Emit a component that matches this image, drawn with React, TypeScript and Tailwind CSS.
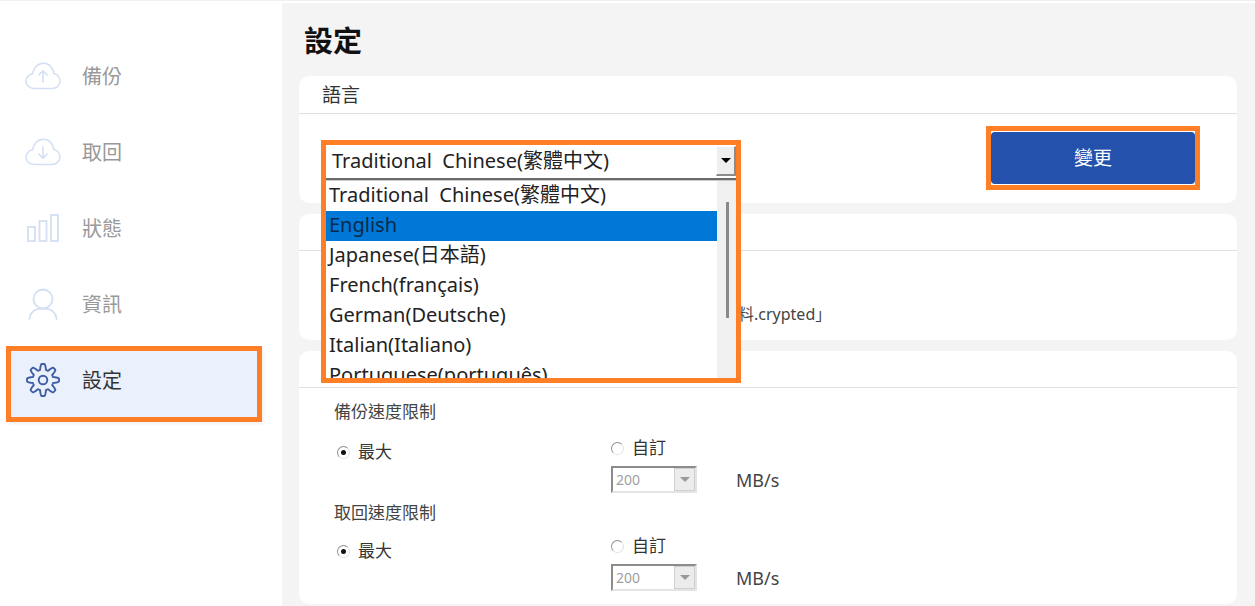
import React from "react"

const font = "font-['Noto_Sans','Noto_Sans_CJK_TC',sans-serif]"

const CloudIcon = ({ down }: { down?: boolean }) => (
  <svg width="36" height="28" viewBox="0 0 36 28" fill="none" stroke="#d3dff3" strokeWidth="1.6" strokeLinecap="round" strokeLinejoin="round">
    <path d="M9 26.5C4.500 26.500 1 23 1 19.300 1 15.500 4 12.300 7.500 11.800 8.500 5.800 13 1.200 18.500 1.200 24 1.200 28 5.500 28.800 11.500 32.300 12.300 35 15.500 35 19.300 35 23.300 31.500 26.500 27 26.500Z" />
    {down ? <path d="M18 9V20M13.800 16L18 20.200 22.200 16" /> : <path d="M18 20V9M13.800 13L18 8.800 22.200 13" />}
  </svg>
)

const BarsIcon = () => (
  <svg width="34" height="28" viewBox="0 0 34 28" fill="none" stroke="#d3dff3" strokeWidth="1.8">
    <rect x="2" y="13" width="7" height="14" />
    <rect x="13.500" y="7" width="7" height="20" />
    <rect x="25" y="1" width="7" height="26" />
  </svg>
)

const UserIcon = () => (
  <svg width="30" height="32" viewBox="0 0 30 32" fill="none" stroke="#d3dff3" strokeWidth="1.8" strokeLinecap="round">
    <circle cx="15" cy="11" r="9.500" />
    <path d="M1.500 31C2 24.500 7 20.500 15 20.500S28 24.500 28.500 31" />
  </svg>
)

// 8 lobed cog outline, sampled around the centre
const gearPath = Array.from({ length: 200 }, (_, i) => {
  const a = (i / 200) * Math.PI * 2
  const wave = Math.max(-1, Math.min(1, Math.cos(8 * a) * 1.5))
  const r = 13.2 + 2.8 * wave
  const x = 17 + r * Math.sin(a)
  const y = 17 - r * Math.cos(a)
  return `${i === 0 ? "M" : "L"}${x.toFixed(2)} ${y.toFixed(2)}`
}).join(" ") + "Z"

const GearIcon = () => (
  <svg width="34" height="34" viewBox="0 0 34 34" fill="none" stroke="#3f5ea3" strokeWidth="1.9" strokeLinejoin="round">
    <path d={gearPath} />
    <circle cx="17" cy="17" r="4.300" />
  </svg>
)

const navItems = [
  { label: "備份", icon: <CloudIcon /> },
  { label: "取回", icon: <CloudIcon down /> },
  { label: "狀態", icon: <BarsIcon /> },
  { label: "資訊", icon: <UserIcon /> },
]

const options = [
  "Traditional  Chinese(繁體中文)",
  "English",
  "Japanese(日本語)",
  "French(français)",
  "German(Deutsche)",
  "Italian(Italiano)",
  "Portuguese(português)",
]

const Radio = ({ checked }: { checked?: boolean }) => (
  <span className="flex h-[13px] w-[13px] items-center justify-center rounded-full border border-b-[#e2e2e2] border-l-[#8f8f8f] border-r-[#e2e2e2] border-t-[#8f8f8f] bg-white">
    {checked && <span className="h-[5px] w-[5px] rounded-full bg-[#111]"></span>}
  </span>
)

const SpeedRow = ({ title, rowClass, leftClass }: { title: string; rowClass: string; leftClass: string }) => (
  <div>
    <div className="h-[24px] pl-[35px] text-[17px] leading-[24px] text-[#444]">{title}</div>
    <div className={`grid grid-cols-[312px_1fr] ${rowClass}`}>
      <div className={`flex items-center gap-[8px] self-start pl-[38px] text-[17px] leading-[24px] text-[#333] ${leftClass}`}>
        <Radio checked />
        <span>最大</span>
      </div>
      <div>
        <div className="flex items-center gap-[8px] text-[17px] leading-[24px] text-[#333]">
          <Radio />
          <span>自訂</span>
        </div>
        <div className="mt-[6px] flex items-center">
          <div className="flex h-[27px] w-[86px] items-stretch border-2 border-b-[#e4e4e4] border-l-[#8c8c8c] border-r-[#e4e4e4] border-t-[#8c8c8c] bg-white">
            <span className="flex-1 pl-[3px] text-[14px] leading-[23px] text-[#a0a0a0]">200</span>
            <span className="flex w-[21px] items-center justify-center border border-[#cfcfcf] bg-[#ececec]">
              <span className="border-x-[5px] border-t-[5px] border-x-transparent border-t-[#9a9a9a]"></span>
            </span>
          </div>
          <span className="ml-[39px] text-[18px] leading-[24px] text-[#444]">MB/s</span>
        </div>
      </div>
    </div>
  </div>
)

const App = () => {
  return (
    <div className={`flex h-[606px] w-[1255px] overflow-hidden border-t border-[#f0f0f0] bg-[#f4f4f4] ${font}`}>
      {/* SIDEBAR */}
      <aside className="relative w-[282px] shrink-0 bg-white pt-[37px]">
        {navItems.map((item) => (
          <div key={item.label} className="flex h-[76px] items-center">
            <div className="flex w-[82px] justify-center pl-[4px]">{item.icon}</div>
            <span className="mt-[1px] text-[20px] leading-none text-[#999]">{item.label}</span>
          </div>
        ))}
        <div className="relative flex h-[76px] items-center">
          <div className="absolute left-[6px] top-[4px] h-[76px] w-[256px] border-[5px] border-[#ff7f27] bg-[#eaf1fd] shadow-[2px_2px_3px_rgba(0,0,0,0.06)]"></div>
          <div className="relative flex w-[82px] justify-center pl-[4px]">
            <GearIcon />
          </div>
          <span className="relative mt-[2px] text-[20px] leading-none text-[#333]">設定</span>
        </div>
      </aside>

      {/* MAIN */}
      <main className="flex-1 border-t-2 border-white pl-[17px] pr-[18px]">
        <h1 className="h-[73px] pl-[5px] pt-[16px] text-[29px] font-bold leading-[44px] text-[#111]">設定</h1>

        {/* LANGUAGE CARD */}
        <section className="relative h-[127px] rounded-[10px] bg-white">
          <div className="h-[38px] border-b border-[#e0e0e0] pl-[23px] text-[19px] leading-[39px] text-[#333]">語言</div>

          <div className="absolute left-[22px] top-[64px] z-10 h-[243px] w-[420px] border-[5px] border-[#ff7f27] bg-white">
            <div className="flex h-[35px] items-start justify-between border-b-2 border-[#6b6b6b] pl-[6px]">
              <span className="whitespace-pre text-[20px] leading-[31px] text-[#222]">{options[0]}</span>
              <span className="mt-[1px] flex h-[30px] w-[20px] items-center justify-center border-b-2 border-l border-r-2 border-t border-b-[#8c8c8c] border-l-white border-r-[#8c8c8c] border-t-white bg-[#efefef]">
                <span className="border-x-[5px] border-t-[5px] border-x-transparent border-t-black"></span>
              </span>
            </div>
            <div className="relative h-[198px] overflow-hidden border-t border-[#ccc]">
              {options.map((opt, i) => (
                <div
                  key={opt}
                  className={`h-[30px] w-[391px] whitespace-pre pl-[3px] text-[20px] leading-[28px] ${i === 1 ? "bg-[#0078d7] text-[#0a2a4a]" : "text-[#222]"}`}
                >
                  {opt}
                </div>
              ))}
              <div className="absolute bottom-0 right-0 top-0 w-[19px] bg-[#f0f0f0]">
                <div className="ml-[9px] mt-[21px] h-[116px] w-[3px] bg-[#8a8a8a]"></div>
              </div>
            </div>
          </div>

          <div className="absolute left-[687px] top-[50px] flex h-[64px] w-[214px] items-stretch border-[5px] border-[#ff7f27] bg-white">
            <button className="my-[1px] w-full rounded-[4px] bg-[#2351ab] text-[19px] text-white">變更</button>
          </div>
        </section>

        {/* ENCRYPT CARD */}
        <section className="mt-[11px] h-[126px] rounded-[10px] bg-white">
          <div className="h-[37px] border-b border-[#e0e0e0]"></div>
          <div className="ml-[423px] pt-[53px] text-[16px] leading-[20px] text-[#444]">資料.crypted」</div>
        </section>

        {/* SPEED CARD */}
        <section className="mt-[11px] h-[253px] rounded-[10px] bg-white">
          <div className="h-[37px] border-b border-[#e0e0e0]"></div>
          <div className="pt-[12px]">
            <SpeedRow title="備份速度限制" rowClass="mt-[12px]" leftClass="mt-[4px]" />
            <div className="mt-[8px]">
              <SpeedRow title="取回速度限制" rowClass="mt-[9px]" leftClass="mt-[5px]" />
            </div>
          </div>
        </section>
      </main>
    </div>
  )
}

export default App
